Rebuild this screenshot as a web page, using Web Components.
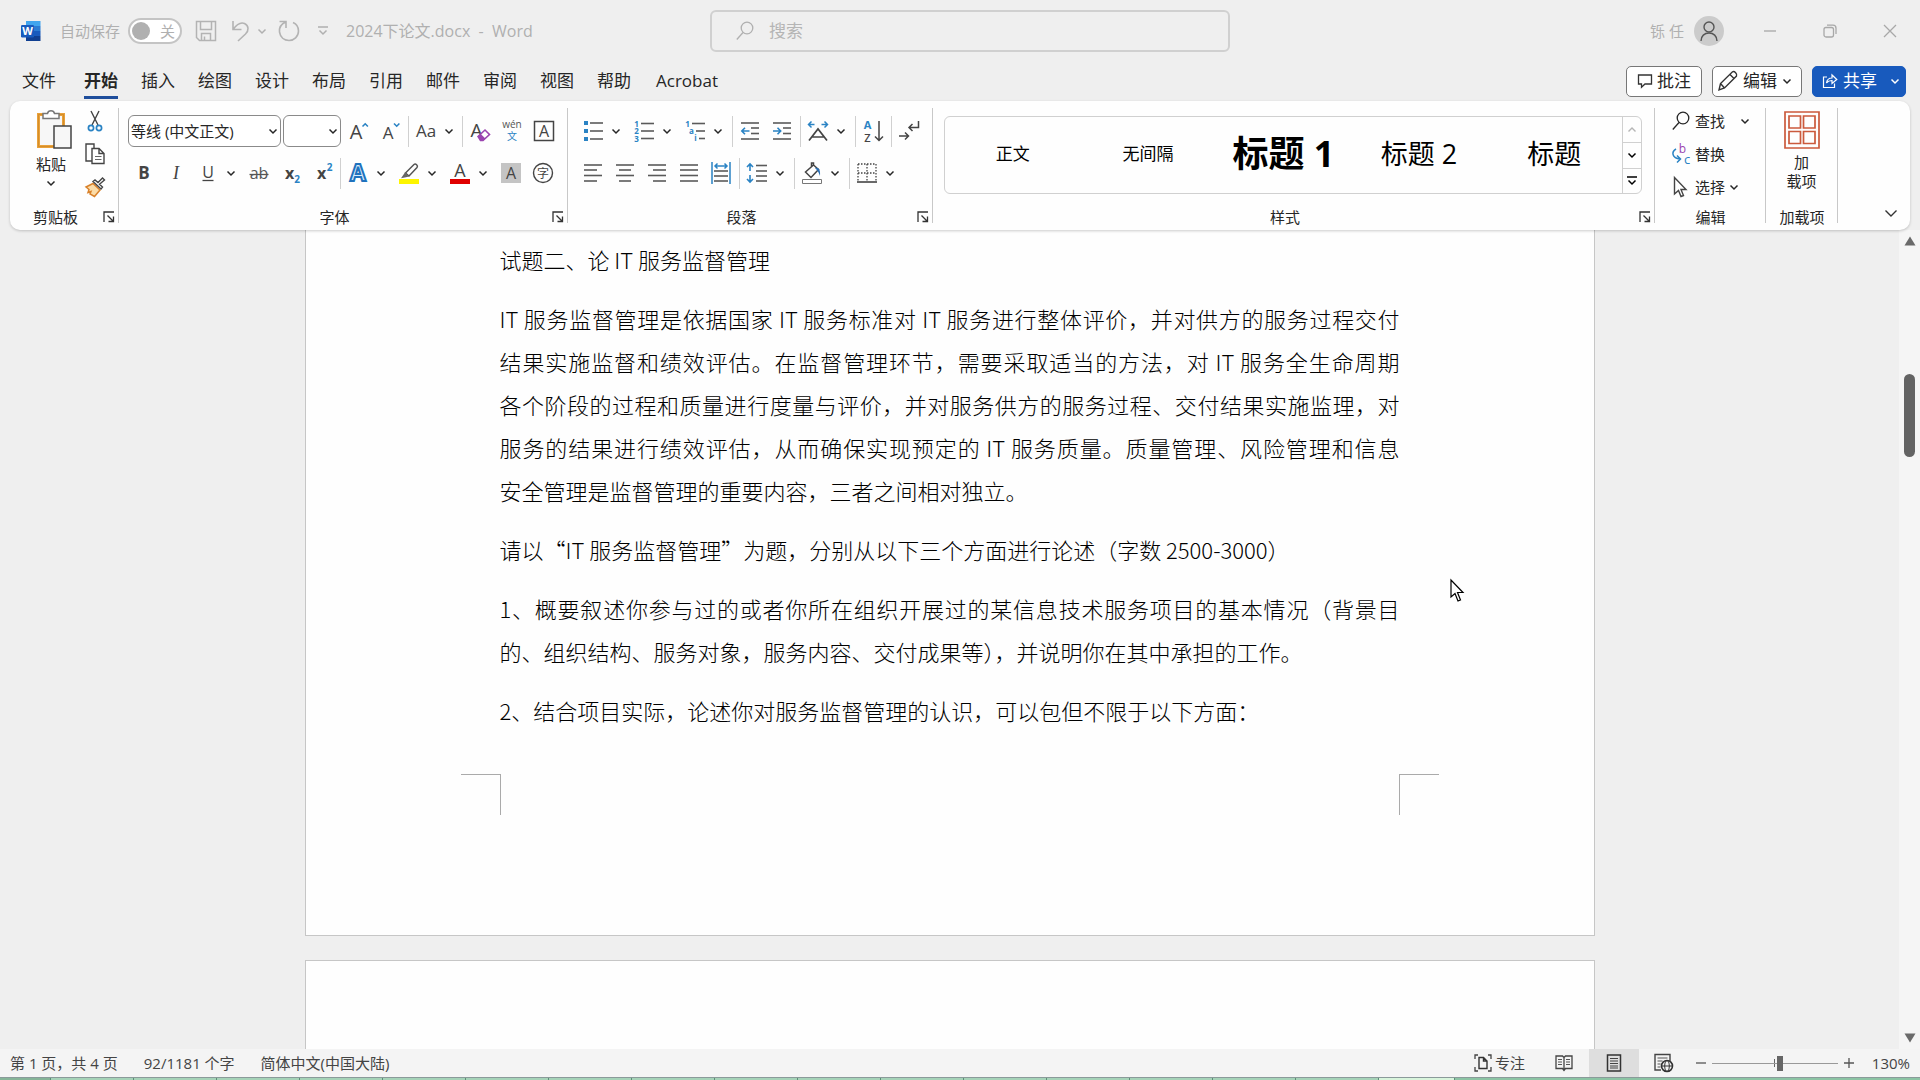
<!DOCTYPE html>
<html lang="zh-CN">
<head>
<meta charset="utf-8">
<title>2024下论文.docx - Word</title>
<style>
html, body { height: 100%; }
body { margin: 0; background: #efefef; color: #262626; font-family: "Open Sans", "Noto Sans CJK SC", sans-serif; font-size: 15px; line-height: 20px; overflow: hidden; }
</style>
</head>
<body>
<word-app></word-app>
<script>
const CHEV = '<path d="M1.5 3.5l3.5 3.5 3.5-3.5" fill="none" stroke="currentColor" stroke-width="1.5"/>';
const lines = (rows, c = '#5a5a5a') => rows.map(r => `<path d="M${r[0]} ${r[2]}H${r[1]}" stroke="${c}" stroke-width="1.6"/>`).join('');
const FF = 'font-family="Open Sans, Noto Sans CJK SC, sans-serif"';
const ICONS = {
  chev: [10, 10, CHEV],
  bigchev: [14, 14, '<path d="M1.5 4.5l5.500 5.500 5.500-5.500" fill="none" stroke="#333" stroke-width="1.4"/>'],
  up: [10, 10, '<path d="M1.500 6.500l3.500-3.500 3.500 3.500" fill="none" stroke="#b5b5b5" stroke-width="1.400"/>'],
  more: [12, 12, '<path d="M1 2h10M2.500 5.500L6 9l3.500-3.500" fill="none" stroke="currentColor" stroke-width="1.500"/>'],
  word: [22, 22, '<path d="M6 1h14.500v5H6z" fill="#41a5ee"/><path d="M6 6h14.500v5H6z" fill="#2b7cd3"/><path d="M6 11h14.500v5H6z" fill="#185abd"/><path d="M6 16h14.500v5H6z" fill="#103f91"/><rect x="1" y="5" width="13" height="12.500" rx="1.200" fill="#185abd"/><text x="7.500" y="15" font-size="11" font-weight="700" text-anchor="middle" fill="#fff" ' + FF + '>W</text>'],
  save: [22, 22, '<path d="M1.500 1.500h19v19h-16l-3-3zM5.500 1.500v8h11v-8M6.500 20.500v-7h9v7M9.500 20.500v-4" fill="none" stroke="#b3b3b3" stroke-width="1.500"/>'],
  undo: [22, 22, '<path d="M3 1v8.500h8.500M3 9.500C7 4 11 2 14.500 3.500c4.500 2 4.500 7 1 10.500L8 21" fill="none" stroke="#b3b3b3" stroke-width="1.600"/>'],
  redo: [22, 22, '<path d="M1.500 1.500H8V8M8 2C3 4 1 7.500 1.500 12c.8 5 4.500 8.500 9.500 8.500s9.500-4 9.500-9.500c0-4-2-7-5.500-8.500" fill="none" stroke="#b3b3b3" stroke-width="1.600"/>'],
  search: [18, 20, '<circle cx="11" cy="7" r="5.800" fill="none" stroke="currentColor" stroke-width="1.300"/><path d="M7 11.500L.8 18.500" stroke="currentColor" stroke-width="1.300"/>'],
  person: [30, 30, '<circle cx="15" cy="15" r="15" fill="#cbcbcb"/><circle cx="15" cy="11" r="5" fill="none" stroke="#555" stroke-width="1.400"/><path d="M7 25c0-5 3.500-8 8-8s8 3 8 8" fill="none" stroke="#555" stroke-width="1.400"/>'],
  min: [14, 14, '<path d="M1 7h12" stroke="#a8a8a8" stroke-width="1.300"/>'],
  max: [14, 14, '<rect x="1" y="3.500" width="9.500" height="9.500" rx="2" fill="none" stroke="#a8a8a8" stroke-width="1.300"/><path d="M4 1.200h6a3 3 0 0 1 3 3V10" fill="none" stroke="#a8a8a8" stroke-width="1.300"/>'],
  close: [14, 14, '<path d="M1 1l12 12M13 1L1 13" stroke="#a8a8a8" stroke-width="1.300"/>'],
  comment: [16, 16, '<path d="M1.500 2h13v9H8l-3.500 3.300V11h-3z" fill="none" stroke="#333" stroke-width="1.300"/>'],
  pencil: [22, 22, '<path d="M2 20l1.500-6.500L15.500 1.800c2-1 5 2 4 4.200L7.500 18zM13 4.500l4 4M3.500 13.500l4 4.500" fill="none" stroke="#333" stroke-width="1.400"/>'],
  share: [16, 16, '<path d="M5 4H1.500v10.500h11V10.500M4.500 10c.5-3.500 2.500-5 5.500-5V2l4.800 4.500L10 10.500v-3c-2.500 0-4 .5-5.500 2.500z" fill="none" stroke="#fff" stroke-width="1.200"/>'],
  paste: [36, 42, '<path d="M2.500 6.500h25v32h-25z" fill="#f7f7f7" stroke="#e9a13b" stroke-width="3"/><path d="M2.500 6.500h25v32h-25z" fill="none" stroke="#c8821f" stroke-width=".6"/><path d="M7 10.500V5.500h4.500a3.600 3.600 0 0 1 7 0H23v5z" fill="#fff" stroke="#777" stroke-width="1.500"/><path d="M18 18h17v22H18z" fill="#f7f7f7" stroke="#444" stroke-width="1.500"/>'],
  cut: [16, 22, '<path d="M4 1l7 14M12 1L5 15" stroke="#444" stroke-width="1.400"/><circle cx="4" cy="18" r="2.600" fill="none" stroke="#2a83c4" stroke-width="1.700"/><circle cx="12" cy="18" r="2.600" fill="none" stroke="#2a83c4" stroke-width="1.700"/>'],
  copy: [20, 22, '<path d="M7 18H1V1h8v4" fill="#fff" stroke="#444" stroke-width="1.400"/><path d="M7 5.500h7l5 5V20.500H7zM14 5.500v5h5" fill="#fff" stroke="#444" stroke-width="1.400"/><path d="M10 13.500h6.500M10 16.500h6.500" stroke="#666" stroke-width="1.200"/>'],
  brush: [20, 20, '<path d="M1 10l7-3.500L15 13l-5.500 6.500L5 17l1-2.500-3 1 1-3z" fill="#fbdca8" stroke="#d9822b" stroke-width="1.500"/><path d="M8 4.500L16 12l1.500-2-3-2.700L19.500 3 17.500 1 13 5.500 10 3z" fill="#fff" stroke="#444" stroke-width="1.400"/>'],
  launch: [12, 12, '<path d="M1 11V1h10M4.500 4.500L10 10M10.500 5.500v5h-5" fill="none" stroke="#333" stroke-width="1.300"/>'],
  grow: [20, 22, `<text x="7" y="18.500" font-size="20" text-anchor="middle" fill="#444" ${FF}>A</text><path d="M13.500 6.500l2.700-2.700 2.700 2.700" fill="none" stroke="#2a83c4" stroke-width="1.600"/>`],
  shrink: [20, 22, `<text x="7" y="18.500" font-size="17" text-anchor="middle" fill="#444" ${FF}>A</text><path d="M13 3.500l2.700 2.700 2.700-2.700" fill="none" stroke="#2a83c4" stroke-width="1.600"/>`],
  caseA: [22, 22, `<text x="11" y="17" font-size="17" text-anchor="middle" fill="#444" ${FF}>Aa</text>`],
  erase: [22, 22, `<text x="7.500" y="17" font-size="19" text-anchor="middle" fill="#444" ${FF}>A</text><path d="M9 16.500l7-6.500 4.500 4.500-6.500 6h-2.500z" fill="#fff" stroke="#9a45b0" stroke-width="1.600"/><path d="M9 16.500l2.800-2.600 4.500 4.500-2.300 2.100h-2.500z" fill="#9a45b0"/>`],
  wen: [22, 22, `<text x="11" y="8" font-size="10" text-anchor="middle" fill="#555" ${FF}>wén</text><text x="11" y="20" font-size="10" text-anchor="middle" fill="#2a83c4" ${FF}>文</text>`],
  boxA: [22, 22, `<rect x="1.500" y="1.500" width="19" height="19" fill="none" stroke="#444" stroke-width="1.500"/><text x="11" y="17" font-size="16" text-anchor="middle" fill="#444" ${FF}>A</text>`],
  bold: [22, 22, `<text x="11" y="17" font-size="17" font-weight="700" text-anchor="middle" fill="#444" ${FF}>B</text>`],
  ital: [22, 22, '<text x="11" y="17" font-size="18" font-style="italic" text-anchor="middle" fill="#444" font-family="Liberation Serif, serif">I</text>'],
  under: [22, 22, `<text x="11" y="15.500" font-size="16" text-anchor="middle" fill="#444" ${FF}>U</text><path d="M5.500 18.500h11" stroke="#444" stroke-width="1.300"/>`],
  strike: [22, 22, `<text x="11" y="17" font-size="16" text-anchor="middle" fill="#555" ${FF}>ab</text><path d="M1.500 12.500h19" stroke="#555" stroke-width="1.300"/>`],
  sub: [22, 22, `<text x="9.500" y="16.500" font-size="16" font-weight="700" text-anchor="middle" fill="#444" ${FF}>x</text><text x="17" y="20.500" font-size="10" font-weight="700" text-anchor="middle" fill="#2a83c4" ${FF}>2</text>`],
  sup: [22, 22, `<text x="9.500" y="16.500" font-size="16" font-weight="700" text-anchor="middle" fill="#444" ${FF}>x</text><text x="17.500" y="8.500" font-size="10" font-weight="700" text-anchor="middle" fill="#2a83c4" ${FF}>2</text>`],
  effect: [22, 22, `<text x="11" y="19" font-size="23" font-weight="700" text-anchor="middle" fill="#d6ebfa" stroke="#2072bd" stroke-width="2" ${FF}>A</text>`],
  marker: [22, 22, '<path d="M7.500 11L16 2.500c1.500-1.500 4.500 1 3 3L11 14z" fill="#fff" stroke="#555" stroke-width="1.500"/><path d="M7 10.500l4 4-3 .8-5 1z" fill="#666"/><path d="M1 17h20v5H1z" fill="#fdf500"/>'],
  color: [22, 22, `<text x="11" y="14.500" font-size="18" text-anchor="middle" fill="#444" ${FF}>A</text><path d="M1 17h20v5H1z" fill="#e00000"/>`],
  shadeA: [22, 22, `<path d="M1 1h20v20H1z" fill="#c4c4c4"/><text x="11" y="17" font-size="16" text-anchor="middle" fill="#444" ${FF}>A</text>`],
  circ: [22, 22, `<circle cx="11" cy="11" r="9.500" fill="none" stroke="#444" stroke-width="1.400"/><text x="11" y="15.500" font-size="12" text-anchor="middle" fill="#444" ${FF}>字</text>`],
  bullets: [20, 20, '<path d="M1 0h4v4H1zM1 8h4v4H1zM1 16h4v4H1z" fill="#2a83c4"/>' + lines([[7, 20, 2], [7, 20, 10], [7, 20, 18]])],
  nums: [20, 22, ['1', '2', '3'].map((n, i) => `<text x="2.500" y="${6.500 + i * 7.700}" font-size="8" font-weight="700" text-anchor="middle" fill="#2a83c4" ${FF}>${n}</text>`).join('') + lines([[7, 20, 3.500], [7, 20, 11], [7, 20, 18.500]])],
  multi: [20, 22, ['1', 'a', 'i'].map((n, i) => `<text x="${2.500 + i * 4}" y="${6.500 + i * 7.300}" font-size="8" font-weight="700" text-anchor="middle" fill="#2a83c4" ${FF}>${n}</text>`).join('') + lines([[7, 20, 3.500], [11, 20, 11], [14, 20, 18.500]])],
  outdent: [20, 20, lines([[1, 19, 2], [11, 19, 7], [11, 19, 12.500], [1, 19, 18]]) + '<path d="M9.500 10H2M5 6.800L1.800 10 5 13.200" fill="none" stroke="#2a83c4" stroke-width="1.600"/>'],
  indent: [20, 20, lines([[1, 19, 2], [11, 19, 7], [11, 19, 12.500], [1, 19, 18]]) + '<path d="M1 10h7.500M5.500 6.800L8.700 10l-3.200 3.200" fill="none" stroke="#2a83c4" stroke-width="1.600"/>'],
  asian: [22, 22, '<path d="M7.500 4.500h-6M4.500 1.500l-3 3 3 3M14.500 4.500h6M17.500 1.500l3 3-3 3" fill="none" stroke="#2a83c4" stroke-width="1.500"/><path d="M2 20.500L11 9l9 11.500M5 17h12" fill="none" stroke="#444" stroke-width="1.700"/>'],
  sort: [22, 22, `<text x="5.500" y="8.500" font-size="11" font-weight="700" text-anchor="middle" fill="#2a83c4" ${FF}>A</text><text x="5.500" y="21.500" font-size="11" font-weight="600" text-anchor="middle" fill="#444" ${FF}>Z</text><path d="M17 1v19M13 16.500l4 4 4-4" fill="none" stroke="#444" stroke-width="1.500"/>`],
  marks: [22, 22, '<path d="M20.500 1v6.500H11M14.500 4L11 7.500l3.500 3.500M1 16h9.500M7 12.500l3.500 3.500L7 19.500" fill="none" stroke="#444" stroke-width="1.500"/>'],
  left: [20, 20, lines([[1, 19, 2], [1, 14, 7], [1, 19, 12.500], [1, 14, 18]])],
  center: [20, 20, lines([[1, 19, 2], [4, 16, 7], [1, 19, 12.500], [4, 16, 18]])],
  right: [20, 20, lines([[1, 19, 2], [6, 19, 7], [1, 19, 12.500], [6, 19, 18]])],
  just: [20, 20, lines([[1, 19, 2], [1, 19, 7], [1, 19, 12.500], [1, 19, 18]])],
  dist: [20, 22, lines([[3, 17, 9], [3, 17, 14], [3, 17, 19]]) + '<path d="M1 0v22M19 0v22M3.500 4h13M6.500 1.500L4 4l2.500 2.500M13.500 1.500L16 4l-2.500 2.500" fill="none" stroke="#2a83c4" stroke-width="1.500"/>'],
  spacing: [22, 22, lines([[10, 21, 3.500], [10, 21, 9], [10, 21, 14], [10, 21, 19]]) + '<path d="M4 2v7M1 5l3-3 3 3M4 13v7M1 17l3 3 3-3" fill="none" stroke="#2a83c4" stroke-width="1.600"/>'],
  fill: [22, 22, '<path d="M12.500 3L4.500 10l5.500 5.500 7.500-8-5-4.500V1h-2v4" fill="none" stroke="#444" stroke-width="1.500"/><path d="M14 6c4-1 5.500 2 5 8-1-3-2-5-5-8z" fill="#2a6fb4"/><path d="M1.500 17.500h19v4h-19z" fill="#fff" stroke="#777"/>'],
  border: [20, 20, '<path d="M1 1h18M1 10h18M1 1v18M10 1v18M19 1v18" stroke="#444" stroke-width="1.300" stroke-dasharray="1.500 1.500"/><path d="M0 19h20" stroke="#444" stroke-width="1.600"/>'],
  replace: [20, 22, `<text x="11.500" y="9.500" font-size="12" text-anchor="middle" fill="#9a45b0" ${FF}>b</text><text x="16" y="21" font-size="13" text-anchor="middle" fill="#2a83c4" ${FF}>c</text><path d="M5 6C0 9 1 15 9 16M6 12.500l3.500 3.500L6 19.500" fill="none" stroke="#2a83c4" stroke-width="1.500"/>`],
  arrow: [18, 22, '<path d="M2.500 1.500v16.500l4-3.500 2.500 6 2.500-1-2.500-6h5z" fill="#fff" stroke="#444" stroke-width="1.400"/>'],
  addins: [36, 38, '<path d="M1 1h34v36H1zM5 5h11.500v12H5zM19.500 5H31v12H19.500zM5 20.500h11.500v12H5zM19.500 20.500H31v12H19.500z" fill="none" stroke="#cb5a3c" stroke-width="1.700"/>'],
  focus: [18, 18, '<path d="M1 5V1h3M14 1h3v4M1 13v4h3M14 17h3v-4" fill="none" stroke="#444" stroke-width="1.300"/><path d="M5 3.500h4.500L13 7v7.500H5zM9.500 3.500V7H13" fill="none" stroke="#333" stroke-width="1.400"/>'],
  read: [18, 18, '<path d="M1 2h6.500L9 3.500 10.500 2H17v12.500h-6.500L9 16.500l-1.500-2H1zM9 3.500v12" fill="none" stroke="#444" stroke-width="1.300"/><path d="M3 5.500h4M3 8h4M3 10.500h4M11 5.500h4M11 8h4M11 10.500h4" stroke="#555"/>'],
  print: [16, 18, '<path d="M1.500 1h13v16h-13z" fill="none" stroke="#333" stroke-width="1.500"/><path d="M4 4.500h8M4 7h8M4 9.500h8M4 12h8M4 14h8" stroke="#444"/>'],
  web: [20, 20, '<path d="M16 8V1.500H1V17h6" fill="none" stroke="#444" stroke-width="1.400"/><path d="M3.500 5h10M3.500 8h5M3.500 11h3M3.500 14h3" stroke="#555"/><circle cx="13" cy="13" r="5.500" fill="#f3f3f3" stroke="#333" stroke-width="1.600"/><ellipse cx="13" cy="13" rx="2.300" ry="5.500" fill="none" stroke="#333"/><path d="M7.500 13h11" stroke="#333"/>'],
  minus: [10, 10, '<path d="M0 5h10" stroke="#555" stroke-width="1.300"/>'],
  plus: [10, 10, '<path d="M0 5h10M5 0v10" stroke="#555" stroke-width="1.300"/>'],
  triUp: [12, 10, '<path d="M6 .5L11.500 9.500H.5z" fill="#6a6a6a"/>'],
  triDown: [12, 10, '<path d="M6 9.500L11.500 .5H.5z" fill="#6a6a6a"/>'],
  pointer: [14, 24, '<path d="M1 1v17l4-3.500 3 7.500 2.500-1-3-7.500H13z" fill="#fff" stroke="#000" stroke-width="1.200"/>'],
};
const svg = n => { const [w, h, b] = ICONS[n]; return `<svg width="${w}" height="${h}" viewBox="0 0 ${w} ${h}" aria-hidden="true">${b}</svg>`; };
const BASE = `
:host { display: block; box-sizing: border-box; }
* { box-sizing: border-box; }
button, input, select { font: inherit; color: inherit; margin: 0; }
button { background: none; border: 0; padding: 0; display: inline-flex; align-items: center; justify-content: center; white-space: nowrap; }
svg { display: block; flex: none; overflow: visible; }`;
const define = (name, css, html) => customElements.define(name, class extends HTMLElement {
  constructor() {
    super();
    this.attachShadow({ mode: 'open' }).innerHTML = `<style>${BASE}${css}</style>` + html;
  }
});

class WordIcon extends HTMLElement {
  connectedCallback() {
    if (!this.shadowRoot) this.attachShadow({ mode: 'open' }).innerHTML = `<style>:host{display:inline-flex;flex:none}svg{display:block;overflow:visible}</style>${svg(this.getAttribute('name'))}`;
  }
}
customElements.define('word-icon', WordIcon);

class ToolButton extends HTMLElement {
  connectedCallback() {
    if (this.shadowRoot) return;
    const label = this.getAttribute('label');
    this.attachShadow({ mode: 'open' }).innerHTML = `<style>${BASE}
      :host { display: flex; height: 32px; flex: none; }
      .main { width: 32px; }
      .drop { width: 19px; justify-content: flex-start; padding-left: 2px; }
    </style><button class="main" aria-label="${label}">${svg(this.getAttribute('icon'))}</button>` +
    (this.hasAttribute('split') ? `<button class="drop" aria-label="${label}选项">${svg('chev')}</button>` : '');
  }
}
customElements.define('tool-button', ToolButton);

define('title-bar', `
:host { display: grid; grid-template-columns: 1fr 520px 1fr; align-items: center; height: 61px; padding-left: 20px; color: #b0b0b0; column-gap: 8px; }
.left, .right { display: flex; align-items: center; }
.right { justify-content: flex-end; }
label.auto { display: flex; align-items: center; margin-left: 18px; gap: 8px; }
.toggle { position: relative; display: flex; }
.toggle input { appearance: none; width: 54px; height: 26px; border: 2px solid #c4c4c4; border-radius: 13px; background: #fff; }
.toggle input::before { content: ""; display: block; width: 18px; height: 18px; margin: 2px; border-radius: 50%; background: #b0b0b0; }
.toggle span { position: absolute; right: 7px; top: 3px; }
.save { margin-left: 13px; } .undo { margin-left: 13px; } .drop { margin-left: 5px; } .redo { margin-left: 11px; } .qat { margin-left: 17px; }
h1 { font-size: 16px; font-weight: 400; margin: 0 0 0 17px; white-space: pre; }
.search { display: flex; align-items: center; gap: 15px; height: 42px; border: 2px solid #d0d0d0; border-radius: 6px; padding: 0 24px; }
.search input { flex: 1; min-width: 0; border: 0; background: none; font-size: 17px; padding: 0; outline: 0; }
.search input::placeholder { color: #b5b5b5; opacity: 1; }
.who { margin-right: 10px; } .win { display: flex; gap: 46px; margin: 0 23px 0 39px; }`,
`<div class="left">${svg('word')}
<label class="auto" for="as"><span>自动保存</span><span class="toggle"><input type="checkbox" id="as"><span>关</span></span></label>
<button class="save" aria-label="保存">${svg('save')}</button><button class="undo" aria-label="撤消">${svg('undo')}</button><button class="drop" aria-label="撤消选项">${svg('chev')}</button><button class="redo" aria-label="重复">${svg('redo')}</button><button class="qat" aria-label="自定义">${svg('more')}</button>
<h1>2024下论文.docx  -  Word</h1></div>
<div class="search">${svg('search')}<input type="search" placeholder="搜索" aria-label="搜索"></div>
<div class="right"><span class="who">铄 任</span><button aria-label="帐户">${svg('person')}</button>
<div class="win"><button aria-label="最小化">${svg('min')}</button><button aria-label="还原">${svg('max')}</button><button aria-label="关闭">${svg('close')}</button></div></div>`);

define('ribbon-tabs', `
:host { display: flex; align-items: center; height: 40px; padding: 0 14px 0 22px; font-size: 17px; }
nav { display: flex; gap: 23px; flex: 1; }
a { color: inherit; text-decoration: none; height: 36px; line-height: 36px; white-space: nowrap; }
a:first-child { margin-right: 5px; }
a[aria-current] { font-weight: 700; border-bottom: 3px solid #1f4e9c; }
a:last-child { margin-left: 2px; }
.acts { display: flex; gap: 10px; }
.acts button { height: 31px; border: 1px solid #777; border-radius: 5px; background: #fff; padding: 0 10px; gap: 4px; }
.acts .edit { padding: 0 9px 0 4px; } .acts .edit svg:last-child { margin-left: 1px; }
.acts .share { background: #185abd; border-color: #185abd; color: #fff; padding: 0 5px 0 9px; gap: 5px; }
.share svg:last-child { margin-left: 8px; }`,
`<nav>${['文件', '开始', '插入', '绘图', '设计', '布局', '引用', '邮件', '审阅', '视图', '帮助', 'Acrobat'].map((t, i) => `<a href="#"${i === 1 ? ' aria-current="page"' : ''}>${t}</a>`).join('')}</nav>
<div class="acts"><button>${svg('comment')}批注</button><button class="edit">${svg('pencil')}编辑${svg('chev')}</button><button class="share">${svg('share')}共享${svg('chev')}</button></div>`);

class RibbonGroup extends HTMLElement {
  connectedCallback() {
    if (this.shadowRoot) return;
    const l = this.getAttribute('label');
    this.attachShadow({ mode: 'open' }).innerHTML = `<style>${BASE}
      :host { display: flex; flex-direction: column; flex: none; position: relative; padding: 3px 0; }
      :host::after { content: ""; position: absolute; right: 0; top: 7px; bottom: 7px; width: 1px; background: #c8c8c8; }
      .body { flex: 1; padding: var(--pad, 11px 8px 0 9px); }
      .foot { display: flex; height: 20px; align-items: center; }
      .foot span { flex: 1; text-align: center; }
      .foot button { width: 16px; margin-right: 2px; }
    </style><div class="body"><slot></slot></div><div class="foot"><span>${l}</span>${this.hasAttribute('launcher') ? `<button aria-label="${l}设置">${svg('launch')}</button>` : ''}</div>`;
  }
}
customElements.define('ribbon-group', RibbonGroup);

define('style-gallery', `
:host { display: flex; height: 78px; border: 1px solid #d0d0d0; border-radius: 6px; color: #000; }
.items { flex: 1; display: grid; grid-template-columns: repeat(5, 1fr); min-width: 0; padding-bottom: 2px; }
.items button { font-size: 17px; }
.items .h1 { font-size: 36px; font-weight: 700; } .items .h2 { font-size: 27px; }
.scroll { width: 19px; display: grid; grid-template-rows: repeat(3, 1fr); border-left: 1px solid #d0d0d0; }
.scroll button + button { border-top: 1px solid #d0d0d0; }`,
`<div class="items"><button>正文</button><button>无间隔</button><button class="h1">标题 1</button><button class="h2">标题 2</button><button class="h2">标题</button></div>
<div class="scroll"><button aria-label="上一行">${svg('up')}</button><button aria-label="下一行">${svg('chev')}</button><button aria-label="其他">${svg('more')}</button></div>`);

const tb = s => s.split(' ').map(t => {
  if (t === '|') return '<i></i>';
  const [icon, label, split] = t.split(':');
  return `<tool-button icon="${icon}" label="${label}"${split ? ' split' : ''}></tool-button>`;
}).join('');

define('word-ribbon', `
:host { display: flex; height: 129px; margin: 0 10px; background: #fefefe; border-radius: 10px; box-shadow: 0 1px 3px #0003; position: relative; z-index: 1; }
.row { display: flex; height: 32px; align-items: center; }
.row + .row { margin-top: 10px; }
.row i { width: 1px; height: 31px; background: #d0d0d0; margin: 0 1px; flex: none; }
.para .row i { margin-left: 2px; }
.clip { display: flex; width: 92px; }
.big { flex-direction: column; justify-content: flex-start; width: 48px; height: 92px; gap: 4px; padding-top: 4px; }
.big svg:first-child { margin-left: 6px; }
.small { display: flex; flex-direction: column; gap: 0; margin-left: 8px; width: 24px; }
.small button { height: 33px; }
.pick { position: relative; display: flex; color: #262626; }
.pick + .pick { margin: 0 2px; }
select { appearance: none; height: 32px; border: 1px solid #8a8a8a; border-radius: 6px; background: #fff; padding: 0 2px; color: #262626; }
.pick svg { position: absolute; right: 3px; top: 11px; pointer-events: none; }
.ff { width: 153px; } .fs { width: 58px; }
.style { flex: 1; min-width: 400px; }
.find { display: flex; flex-direction: column; width: 94px; }
.find button { height: 33px; justify-content: flex-start; gap: 4px; }
.find word-icon:first-child { width: 20px; justify-content: center; }
.find .far { margin-left: 11px; }
.add { flex-direction: column; width: 71px; gap: 4px; line-height: 19px; }
.end { width: 72px; display: flex; align-items: flex-end; justify-content: flex-end; padding: 0 12px 10px 0; }`,
`<ribbon-group label="剪贴板" launcher style="--pad:0 0 0 17px"><div class="clip">
<button class="big">${svg('paste')}<span>粘贴</span>${svg('chev')}</button>
<div class="small"><button aria-label="剪切">${svg('cut')}</button><button aria-label="复制">${svg('copy')}</button><button aria-label="格式刷">${svg('brush')}</button></div></div></ribbon-group>
<ribbon-group label="字体" launcher>
<div class="row"><span class="pick"><select class="ff" aria-label="字体"><option>等线 (中文正文)</option></select>${svg('chev')}</span><span class="pick"><select class="fs" aria-label="字号"><option></option></select>${svg('chev')}</span>
${tb('grow:增大字号 shrink:减小字号 | caseA:更改大小写:s | erase:清除格式 wen:拼音指南 boxA:字符边框')}</div>
<div class="row">${tb('bold:加粗 ital:倾斜 under:下划线:s strike:删除线 sub:下标 sup:上标 | effect:文本效果:s marker:突出显示:s color:字体颜色:s shadeA:字符底纹 circ:带圈字符')}</div></ribbon-group>
<ribbon-group label="段落" launcher class="para">
<div class="row">${tb('bullets:项目符号:s nums:编号:s multi:多级列表:s | outdent:减少缩进 indent:增加缩进 | asian:中文版式:s | sort:排序 | marks:显示标记')}</div>
<div class="row">${tb('left:左对齐 center:居中 right:右对齐 just:两端对齐 dist:分散对齐 | spacing:行距:s | fill:底纹:s | border:边框:s')}</div></ribbon-group>
<ribbon-group label="样式" launcher class="style" style="--pad:12px 13px 0 11px"><style-gallery></style-gallery></ribbon-group>
<ribbon-group label="编辑" style="--pad:0 1px 0 16px"><div class="find">
<button><word-icon name="search"></word-icon><span>查找</span><word-icon class="far" name="chev"></word-icon></button>
<button><word-icon name="replace"></word-icon><span>替换</span></button>
<button><word-icon name="arrow"></word-icon><span>选择</span><word-icon name="chev"></word-icon></button></div></ribbon-group>
<ribbon-group label="加载项" style="--pad:7px 1px 0 0"><button class="add">${svg('addins')}<span>加<br>载项</span></button></ribbon-group>
<div class="end"><button aria-label="折叠功能区">${svg('bigchev')}</button></div>`);

define('doc-page', `
:host { width: 1290px; background: #fefefe; border: 1px solid #c6c6c6; padding: 0 194px; color: #000; flex: none; }`, '<slot></slot>');

define('doc-para', `
:host { font-family: "Noto Sans CJK SC", sans-serif; font-weight: 300; font-size: 22px; line-height: 43px; margin-bottom: 16px; text-align: left; }
::slotted(span) { display: block; white-space: nowrap; }
::slotted(span:not(:last-child)) { text-align: justify; text-align-last: justify; white-space: normal; }`, '<slot></slot>');

define('doc-view', `
:host { display: flex; flex: 1; min-height: 0; position: relative; overflow: hidden; }
.canvas { flex: 1; display: flex; flex-direction: column; align-items: center; gap: 24px; min-width: 0; }
doc-page:first-child { border-top: 0; padding-top: 8px; padding-bottom: 120px; }
doc-page:last-child { height: 400px; }
.corners { display: flex; justify-content: space-between; margin: 42px -39px 0; }
.corners b { width: 40px; height: 41px; border: solid #aaa; border-width: 1px 1px 0 0; }
.corners b + b { border-width: 1px 0 0 1px; }
.bar { width: 21px; background: #f5f5f5; display: flex; flex-direction: column; align-items: center; justify-content: space-between; padding: 6px 0; position: relative; }
.thumb { position: absolute; top: 144px; width: 11px; height: 83px; border-radius: 6px; background: #636363; }
.pointer { position: absolute; left: 1450px; top: 349px; }`,
`<div class="canvas"><doc-page>
<doc-para><span>试题二、论 IT 服务监督管理</span></doc-para>
<doc-para><span>IT 服务监督管理是依据国家 IT 服务标准对 IT 服务进行整体评价，并对供方的服务过程交付</span><span>结果实施监督和绩效评估。在监督管理环节，需要采取适当的方法，对 IT 服务全生命周期</span><span>各个阶段的过程和质量进行度量与评价，并对服务供方的服务过程、交付结果实施监理，对</span><span>服务的结果进行绩效评估，从而确保实现预定的 IT 服务质量。质量管理、风险管理和信息</span><span>安全管理是监督管理的重要内容，三者之间相对独立。</span></doc-para>
<doc-para><span>请以“IT 服务监督管理”为题，分别从以下三个方面进行论述（字数 2500-3000）</span></doc-para>
<doc-para><span>1、概要叙述你参与过的或者你所在组织开展过的某信息技术服务项目的基本情况（背景目</span><span>的、组织结构、服务对象，服务内容、交付成果等），并说明你在其中承担的工作。</span></doc-para>
<doc-para><span>2、结合项目实际，论述你对服务监督管理的认识，可以包但不限于以下方面：</span></doc-para>
<div class="corners"><b></b><b></b></div>
</doc-page><doc-page></doc-page></div>
<div class="bar">${svg('triUp')}<div class="thumb"></div>${svg('triDown')}</div>
<div class="pointer">${svg('pointer')}</div>`);

define('status-bar', `
:host { display: flex; align-items: center; height: 28px; background: #f4f4f4; padding: 0 10px; color: #444; }
.txt { display: flex; gap: 26px; flex: 1; white-space: nowrap; }
button { height: 28px; } .focus { gap: 3px; margin-right: 14px; }
.view { width: 50px; } .on { background: #dedede; }
.zoom { display: flex; align-items: center; gap: 6px; margin-left: 7px; }
input { appearance: none; width: 126px; height: 16px; background: linear-gradient(#999, #999) center / 100% 1px no-repeat, linear-gradient(#666, #666) 62px center / 1px 8px no-repeat; }
input::-webkit-slider-thumb { appearance: none; width: 6px; height: 15px; background: #666; }
.pct { width: 56px; text-align: right; }`,
`<div class="txt"><span>第 1 页，共 4 页</span><span>92/1181 个字</span><span>简体中文(中国大陆)</span></div>
<button class="focus">${svg('focus')}专注</button><button class="view" aria-label="阅读视图">${svg('read')}</button><button class="view on" aria-label="页面视图">${svg('print')}</button><button class="view" aria-label="Web 版式视图">${svg('web')}</button>
<div class="zoom"><button aria-label="缩小">${svg('minus')}</button><input type="range" min="0" max="100" value="54" aria-label="显示比例"><button aria-label="放大">${svg('plus')}</button></div><span class="pct">130%</span>`);

define('sheet-edge', `
:host { display: flex; height: 3px; border-top: 1px solid #8b9a9a; background: #8cc4a4; }
i { width: 83px; background: #a6d3b8; border-left: 1px solid #5d8f78; }
i:first-of-type { width: 50px; background: #86b498; border: 0; }
i:last-of-type { width: 77px; background: #d9f5dc; border-right: 1px solid #5d8f78; }`,
'<i></i>'.repeat(18));

define('word-app', `:host { display: flex; flex-direction: column; height: 100vh; }`,
'<title-bar></title-bar><ribbon-tabs></ribbon-tabs><word-ribbon></word-ribbon><doc-view></doc-view><status-bar></status-bar><sheet-edge></sheet-edge>');
</script>
</body>
</html>
